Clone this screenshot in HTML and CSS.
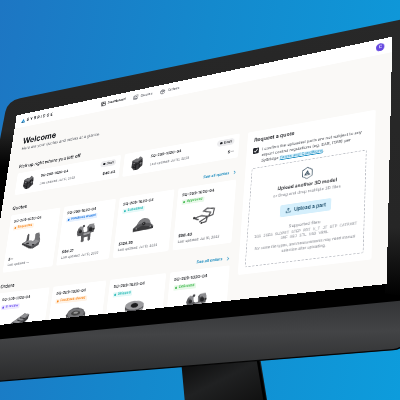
FILE: index.html
```
<!DOCTYPE html>
<html lang="en">
<head>
<meta charset="utf-8">
<meta name="viewport" content="width=device-width, initial-scale=1">
<title>SyBridge dashboard</title>
<link rel="stylesheet" href="styles.css">
</head>
<body>
<svg class="defs" aria-hidden="true">
  <symbol id="block" viewBox="0 0 48 52">
    <path d="M4 14 20 7l6 3 8-8 10 8 2 26-16 13-8 1-8 0L3 38z" fill="#3c3c3f"/>
    <path d="M4 14 20 7l6 3 8-8 10 8-12 7-8 5-6-1z" fill="#707073"/>
    <path d="M20 22v28M32 18l2 26M6 26l13 6M22 30l22-10M7 36l12 5" stroke="#19191b" stroke-width="3" fill="none"/>
    <circle cx="38" cy="27" r="4" fill="#77777a"/><circle cx="12" cy="25" r="3" fill="#88888b"/>
  </symbol>
  <symbol id="bracket" viewBox="0 0 80 64">
    <path d="M2 36 18 30 19 8l5-4 4 4v22l20 3 6-5V8q9-6 16-1l7 30-4 14-24 11-17-3L2 42z" fill="#555558"/>
    <path d="M2 36 28 29l22 5 8-6 17 9-22 14-12 4z" fill="#919194"/>
    <path d="M54 28V8q9-6 16-1l5 30z" fill="#737376"/>
    <path d="M2 36v6l40 19 2-8z" fill="#3b3b3d"/>
    <ellipse cx="25" cy="40" rx="6" ry="3" fill="#2b2b2d"/><ellipse cx="50" cy="48" rx="6" ry="3" fill="#2b2b2d"/>
  </symbol>
  <symbol id="clamp" viewBox="0 0 80 72">
    <path d="M3 14 12 7l12 3 4 20 8 3 10-2-3-19 9-9 20-1 5 16-2 18-14 2 2 27-6 5-6-3-1-15-17 2 1 15-6 4-7-4-1-24-17 1-5-18z" fill="#59595c"/>
    <path d="m3 14 9-7 12 3 4 20-10 3-3-16zM52 3l20-1 5 16-13 4-3-11-11 4z" fill="#8c8c8f"/>
    <circle cx="14" cy="28" r="7" fill="#28282a"/><circle cx="60" cy="24" r="8" fill="#242426"/>
    <path d="m28 38 30-5v8l-26 5z" fill="#a0a0a3"/><circle cx="27" cy="7" r="5" fill="#444447"/><circle cx="74" cy="24" r="4" fill="#333"/>
  </symbol>
  <symbol id="arch" viewBox="0 0 80 48">
    <path d="M2 34 14 24q8-20 28-22 20 1 25 21l11 10-1 9-75 4z" fill="#555558"/>
    <path d="M14 24q8-20 28-22 20 1 25 21-26-9-53 1z" fill="#7b7b7e"/>
    <path d="M2 34h22q8-10 28-2l26 1-1 9-75 4z" fill="#3a3a3c"/>
    <circle cx="41" cy="21" r="6" fill="#222224"/><circle cx="41" cy="20" r="2" fill="#aaa"/>
    <circle cx="14" cy="36" r="3" fill="#999"/><circle cx="67" cy="34" r="3" fill="#999"/>
  </symbol>
  <symbol id="frame" viewBox="0 0 90 64">
    <g fill="none" stroke-linejoin="round" stroke-linecap="round"><path d="m40 14 14-9 30 4-4 24-22 5-4 18-18 4M40 14l30 8-8 16-28-7M34 31 4 37M58 38 28 54M4 37l18 8" stroke="#4c4c4f" stroke-width="5"/>
    <path d="m40 13 14-9 30 4M40 13l30 8-8 15-28-7L4 35" stroke="#a0a0a3" stroke-width="1"/></g>
    <circle cx="4" cy="36" r="4" fill="#333"/><circle cx="36" cy="59" r="4" fill="#333"/>
  </symbol>
  <symbol id="plate" viewBox="0 0 80 64">
    <path d="M3 34 56 3l20 5-4 17-40 35-30-8z" fill="#505053"/><path d="M12 30 56 3l20 5-42 30z" fill="#8e8e91"/>
    <path d="M28 24 49 30M40 17l22 6M3 42l31 8 38-32" stroke="#2c2c2e" stroke-width="3" fill="none"/>
  </symbol>
  <symbol id="gear" viewBox="0 0 80 64">
    <path d="M2 26 12 12l16-8h20l20 7 10 14-2 20-18 15H26L6 48z" fill="#4d4d50"/><ellipse cx="40" cy="23" rx="32" ry="17" fill="#77777a"/>
    <ellipse cx="40" cy="22" rx="18" ry="8" fill="#444"/><ellipse cx="40" cy="20" rx="9" ry="4" fill="#999"/><path d="m8 34 14 7 18 2 20-3 14-8" stroke="#aaa" stroke-width="3" fill="none"/>
  </symbol>
  <symbol id="bushing" viewBox="0 0 70 60">
    <path d="M2 15v15l8 10v28h50V38l6-12V13z" fill="#505053"/><ellipse cx="34" cy="16" rx="32" ry="14" fill="#9b9b9e"/>
    <ellipse cx="34" cy="16" rx="13" ry="7" fill="#1c1c1e"/><path d="M4 29q30 20 60-2M12 44q24 13 46-1" stroke="#a5a5a8" stroke-width="4" fill="none"/>
  </symbol>
</svg>

<div class="scene">
  <svg class="monitor" viewBox="0 0 1200 1200" preserveAspectRatio="xMidYMid slice" aria-hidden="true">
    <defs>
      <linearGradient id="bezel" x1="0" y1="0" x2="0" y2="1"><stop offset="0" stop-color="#282828"/><stop offset=".34" stop-color="#252525"/><stop offset=".46" stop-color="#000"/></linearGradient>
      <linearGradient id="side" x1="0" y1="0" x2="0" y2="1"><stop offset="0" stop-color="#282828"/><stop offset=".75" stop-color="#262626"/><stop offset="1" stop-color="#000"/></linearGradient>
      <linearGradient id="chin" x1="0" y1="0" x2="0.08" y2="1"><stop offset="0" stop-color="#303133"/><stop offset=".45" stop-color="#434446"/><stop offset="1" stop-color="#292a2b"/></linearGradient>
      <linearGradient id="stand" x1="0" y1="0" x2="1" y2="1"><stop offset="0" stop-color="#080808"/><stop offset=".5" stop-color="#202122"/><stop offset="1" stop-color="#101010"/></linearGradient>
    </defs>
    <path d="M544 1090 780 1070 801 1200H554z" fill="url(#stand)"/>
    <path d="M774 1080 794 1200" stroke="#000" stroke-width="8"/>
    <path d="M-10 470 16 335Q24 303 60 295L1210 57V920L-10 1030z" fill="url(#bezel)"/>
    <path d="M1170 90 1210 60V890L1155 880z" fill="url(#side)"/>
    <path d="M-10 1019 1210 901V1030Q1205 1047 1180 1050L-10 1144z" fill="url(#chin)"/>
    <path d="M-10 1144 1180 1049Q1200 1047 1210 1034" stroke="#050505" stroke-width="4" fill="none"/>
  </svg>

  <div class="screen">
   <div class="ui">
    <header class="topbar">
      <a class="brand" href="#">
        <svg class="brand-mark" viewBox="0 0 20 18"><path d="M10 1 1 17h5l4-8 4 8h5z" fill="#168bd2"/><path d="M1 17 10 12l3 5z" fill="#0b4774"/></svg>
        <span>SYBRIDGE</span>
      </a>
      <nav class="nav">
        <a class="nav-link active" href="#"><svg class="icon" viewBox="0 0 20 20"><path d="M2 3h16v14H2zM2 9h16M10 3v6M7 9v8"/></svg>Dashboard</a>
        <a class="nav-link" href="#"><svg class="icon" viewBox="0 0 20 20"><path d="M6 2h12v13H6zM6 5H2v13h12v-3M9 6h6M9 9h6M9 12h3"/></svg>Quotes</a>
        <a class="nav-link" href="#"><svg class="icon" viewBox="0 0 20 20"><path d="m10 2 8 4v9l-8 4-8-4V6zM2 6l8 4 8-4M10 10v9M6 4l8 4v4"/></svg>Orders</a>
      </nav>
      <button class="avatar" type="button" aria-label="Account">C</button>
    </header>

    <main class="page">
      <div class="content">
        <div class="intro">
          <h1>Welcome</h1>
          <p>Here are your quotes and orders at a glance.</p>
        </div>

        <section class="section">
          <h2>Pick up right where you left off</h2>
          <div class="drafts">
            <article class="card draft">
              <svg class="draft-part"><use href="#block"/></svg>
              <div class="draft-info"><h3>SQ-209-1020-04</h3><p class="updated">Last updated: Jul 10, 2023</p></div>
              <div class="draft-side"><span class="badge">Draft</span><strong>$49.42</strong></div>
            </article>
            <article class="card draft">
              <svg class="draft-part"><use href="#block"/></svg>
              <div class="draft-info"><h3>SQ-209-1020-04</h3><p class="updated">Last updated: Jul 10, 2023</p></div>
              <div class="draft-side"><span class="badge">Draft</span><strong>$--</strong></div>
            </article>
          </div>
        </section>

        <section class="section">
          <div class="section-head"><h2>Quotes</h2><a class="see-all" href="#">See all quotes <svg class="chevron" viewBox="0 0 10 14"><path d="m2 2 5 5-5 5"/></svg></a></div>
          <div class="cards">
            <article class="card part"><h3>SQ-209-1020-04</h3><span class="tag orange">Requested</span><svg class="picture"><use href="#bracket"/></svg><strong>$--</strong><p class="updated">Last updated: --</p></article>
            <article class="card part"><h3>SQ-209-1020-04</h3><span class="tag blue">Feedback shared</span><svg class="picture"><use href="#clamp"/></svg><strong>$94.21</strong><p class="updated">Last updated: Jul 10, 2023</p></article>
            <article class="card part"><h3>SQ-209-1020-04</h3><span class="tag teal">Submitted</span><svg class="picture"><use href="#arch"/></svg><strong>$124.35</strong><p class="updated">Last updated: Jul 10, 2023</p></article>
            <article class="card part"><h3>SQ-209-1020-04</h3><span class="tag green">Approved</span><svg class="picture"><use href="#frame"/></svg><strong>$98.43</strong><p class="updated">Last updated: Jul 10, 2023</p></article>
          </div>
        </section>

        <section class="section">
          <div class="section-head"><h2>Orders</h2><a class="see-all" href="#">See all orders <svg class="chevron" viewBox="0 0 10 14"><path d="m2 2 5 5-5 5"/></svg></a></div>
          <div class="cards">
            <article class="card part"><h3>SQ-209-1020-04</h3><span class="tag violet">In review</span><svg class="picture"><use href="#plate"/></svg></article>
            <article class="card part"><h3>SQ-209-1020-04</h3><span class="tag orange">Feedback shared</span><svg class="picture"><use href="#gear"/></svg></article>
            <article class="card part"><h3>SQ-209-1020-04</h3><span class="tag teal">Shipped</span><svg class="picture"><use href="#bushing"/></svg></article>
            <article class="card part"><h3>SQ-209-1020-04</h3><span class="tag green">Delivered</span><svg class="picture"><use href="#clamp"/></svg></article>
          </div>
        </section>
      </div>

      <aside class="card request">
        <h2>Request a quote</h2>
        <div class="confirm">
          <input type="checkbox" id="confirm" checked>
          <label for="confirm">I confirm the uploaded parts are not subject to any export control regulations (eg. EAR, ITAR) per SyBridge <a href="#">Terms and Conditions</a>.</label>
        </div>
        <div class="dropzone">
          <svg class="model" viewBox="0 0 44 44"><path d="m22 3 16 9v20l-16 9-16-9V12z"/><path d="m22 14 8 14H14zM22 14v9M14 28l8-5 8 5"/></svg>
          <h3>Upload another 3D model</h3>
          <p class="hint">or Drag and drop multiple 3D files</p>
          <button class="upload" type="button"><svg class="icon" viewBox="0 0 20 20"><path d="M10 13V3M6 7l4-4 4 4M3 12v5h14v-5"/></svg>Upload a part</button>
          <p class="hint">Supported files:</p>
          <p class="formats">IGS IGES SLDPRT STEP PRT X_T JT STP CATPART 3MF OBJ STL USD VRML</p>
          <p class="note">For some file types, and measurements may need manual selection after uploading.</p>
        </div>
      </aside>
    </main>
   </div>
  </div>
</div>
</body>
</html>
```
FILE: styles.css
```
* { box-sizing: border-box; }
body { margin: 0; }
h1, h2, h3, p { margin: 0; }
a { color: inherit; text-decoration: none; }
button { font: inherit; border: 0; }
.defs { position: absolute; width: 0; height: 0; }

.scene {
  position: relative;
  height: 100vh;
  overflow: hidden;
  background: linear-gradient(100deg, #1d76c3 0%, #1489cd 45%, #0d9cdc 100%);
}
.monitor { display: block; width: 100%; height: 100%; }

/* The display is a 16:9 plane seen in perspective */
.screen {
  position: absolute;
  top: 0;
  left: 0;
  width: 576px;
  aspect-ratio: 16 / 9;
  overflow: hidden;
  background: #faf9f7;
  transform-origin: 0 0;
  transform: matrix3d(0.54474, -0.146615, 0, -0.0002739, -0.0992375, 0.580865, 0, -0.00021855, 0, 0, 1, 0, 16.67, 115.33, 0, 1);
}
/* Desktop layout, 1440px wide, reduced to the plane */
.ui {
  zoom: 0.4;
  color: #1d1f24;
  font: 14px/20px Inter, "Liberation Sans", sans-serif;
  text-rendering: geometricPrecision;
}

.topbar {
  display: grid;
  grid-template-columns: 348px 1fr auto;
  align-items: center;
  height: 56px;
  padding: 0 24px;
  background: #fff;
}
.brand { display: flex; align-items: center; gap: 6px; font-size: 16px; font-weight: 600; letter-spacing: 5px; }
.brand-mark { width: 20px; height: 18px; }
.nav { display: flex; gap: 32px; }
.nav-link { display: flex; align-items: center; gap: 8px; color: #5d6068; font-weight: 500; }
.nav-link.active { color: #1d1f24; font-weight: 600; }
.icon { width: 20px; height: 20px; fill: none; stroke: currentColor; stroke-width: 2; }
.avatar { width: 28px; height: 28px; padding: 0; border-radius: 50%; background: #6548e0; color: #fff; font-size: 14px; font-weight: 600; }

.page {
  display: grid;
  grid-template-columns: minmax(0, 1fr) 430px;
  align-items: start;
  gap: 30px;
  padding: 44px 48px 0;
}
.content { display: grid; gap: 40px; }
.intro { padding-bottom: 6px; color: #5d6068; font-size: 16px; line-height: 24px; }
h1 { color: #15171b; font-size: 32px; line-height: 36px; font-weight: 700; }
h2 { font-size: 18px; line-height: 24px; font-weight: 600; }
h3 { font-size: 14px; line-height: 20px; font-weight: 600; }
strong { font-weight: 700; }
.section { display: grid; gap: 12px; }
.section-head { display: flex; align-items: center; justify-content: space-between; }
.see-all { display: flex; align-items: center; gap: 14px; padding-right: 2px; color: #1488bd; font-weight: 600; }
.chevron { width: 10px; height: 14px; fill: none; stroke: currentColor; stroke-width: 2; }
.card { border-radius: 6px; background: #fff; }
.updated { color: #5d6068; font-size: 12px; }

.drafts { display: grid; grid-template-columns: repeat(2, 1fr); gap: 16px; }
.draft { display: flex; align-items: center; gap: 24px; padding: 14px 16px; }
.draft-part { width: 52px; height: 52px; margin-left: 12px; }
.draft-info { display: grid; gap: 8px; flex: 1; }
.draft-side { display: grid; justify-items: end; gap: 16px; }
.badge { display: flex; align-items: center; gap: 6px; padding: 1px 10px; border-radius: 12px; background: #ececee; font-size: 12px; font-weight: 600; }
.badge::before, .tag::before { content: ""; width: 8px; height: 8px; border-radius: 50%; background: currentColor; }

.cards { display: grid; grid-template-columns: repeat(4, 1fr); gap: 16px; }
.part { display: flex; flex-direction: column; align-items: flex-start; min-height: 212px; padding: 18px 16px 14px; }
.tag { display: flex; align-items: center; gap: 6px; margin-top: 6px; padding: 0 6px; border-radius: 4px; font-size: 12px; line-height: 18px; font-weight: 600; }
.orange { background: #fff3e6; color: #fa8416; }
.blue { background: #e5f0ff; color: #1673e0; }
.teal { background: #e6f9f8; color: #18b5b1; }
.green { background: #e9f9ea; color: #36b545; }
.violet { background: #efebff; color: #6244ef; }
.picture { align-self: center; width: 80px; height: 64px; margin: 18px 0; }

.request { display: grid; gap: 16px; margin-top: 146px; padding: 20px 24px 24px; }
.confirm { display: flex; gap: 10px; }
.confirm input { flex: none; width: 20px; height: 20px; margin: 0; accent-color: #22252b; }
.confirm label { color: #44474e; }
.confirm a { color: #1488bd; background: #d8f0fb; text-decoration: underline; }
.dropzone {
  display: flex;
  flex-direction: column;
  align-items: center;
  margin-top: -8px;
  padding: 24px 16px;
  border: 2px dashed #b9bcc3;
  border-radius: 6px;
  text-align: center;
}
.model { width: 44px; height: 44px; fill: none; stroke: #32495a; stroke-width: 2; }
.dropzone h3 { margin-top: 6px; font-size: 16px; line-height: 24px; }
.hint { color: #7b7e86; }
.upload { display: flex; align-items: center; gap: 8px; height: 40px; margin: 24px 0; padding: 0 18px; border-radius: 6px; background: #d5effc; color: #174966; font-size: 16px; font-weight: 600; }
.formats { margin-top: 2px; color: #8b8e95; font: 13px/16px "Liberation Mono", monospace; }
.note { margin-top: 8px; color: #7b7e86; font-size: 12px; line-height: 18px; }
```
